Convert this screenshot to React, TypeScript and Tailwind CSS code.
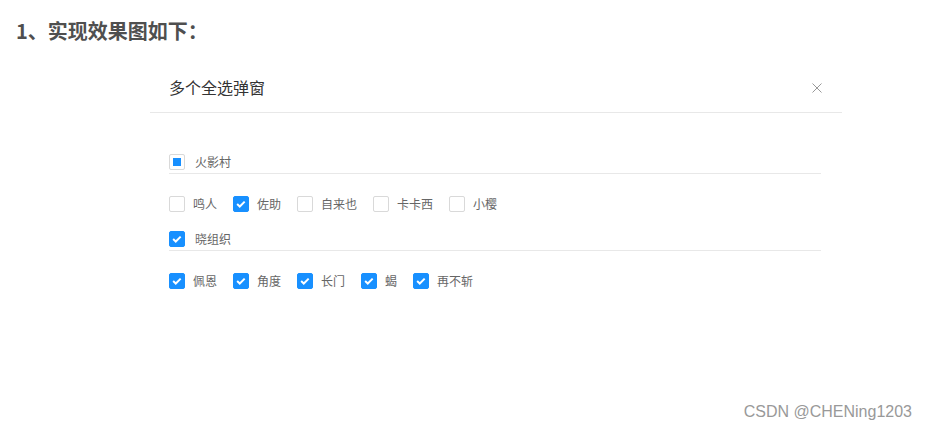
import React, { useState } from 'react';

const cjk = '"Noto Sans CJK SC", "Noto Sans", sans-serif';

interface Group {
  name: string;
  members: string[];
}

const groups: Group[] = [
  { name: '火影村', members: ['鸣人', '佐助', '自来也', '卡卡西', '小樱'] },
  { name: '晓组织', members: ['佩恩', '角度', '长门', '蝎', '再不斩'] },
];

function Box({ state, onClick }: { state: 'off' | 'on' | 'half'; onClick?: () => void }) {
  if (state === 'on') {
    return (
      <span
        onClick={onClick}
        className="w-[16px] h-[16px] rounded-[2px] bg-[#1890ff] border border-[#1890ff] flex items-center justify-center shrink-0 cursor-pointer"
      >
        <svg width="16" height="16" viewBox="0 0 16 16" className="block">
          <path d="M3.6 8 L6.6 10.9 L12.2 5.3" fill="none" stroke="#fff" strokeWidth="2.2" />
        </svg>
      </span>
    );
  }
  return (
    <span
      onClick={onClick}
      className="w-[16px] h-[16px] rounded-[2px] bg-white border border-[#d9d9d9] flex items-center justify-center shrink-0 cursor-pointer"
    >
      {state === 'half' && <span className="w-[8px] h-[8px] bg-[#1890ff]" />}
    </span>
  );
}

export default function App() {
  const [checked, setChecked] = useState<Record<string, boolean>>({
    佐助: true,
    佩恩: true,
    角度: true,
    长门: true,
    蝎: true,
    再不斩: true,
  });

  const toggle = (name: string) => setChecked(prev => ({ ...prev, [name]: !prev[name] }));

  const groupState = (g: Group) => {
    const n = g.members.filter(m => checked[m]).length;
    if (n === 0) return 'off';
    if (n === g.members.length) return 'on';
    return 'half';
  };

  const toggleGroup = (g: Group) => {
    const all = groupState(g) !== 'on';
    setChecked(prev => {
      const next = { ...prev };
      g.members.forEach(m => (next[m] = all));
      return next;
    });
  };

  return (
    <div className="relative w-full h-[432px] bg-white overflow-hidden" style={{ fontFamily: cjk }}>
      {/* Heading */}
      <h3 className="pt-[17px] pl-[16px] text-[20px] leading-[28px] font-bold text-[#4f4f4f]">
        1、实现效果图如下：
      </h3>

      {/* Modal */}
      <div className="ml-[150px] w-[692px] mt-[16px] bg-white">
        <div className="h-[52px] pl-[19px] pr-[20px] flex items-center justify-between border-b border-[#e8e8e8]">
          <span className="text-[16px] leading-[22px] text-[#333]">多个全选弹窗</span>
          <svg width="10" height="10" viewBox="0 0 10 10" className="mt-[2px]">
            <path d="M0.5 0.5 L9.5 9.5 M9.5 0.5 L0.5 9.5" stroke="#999" strokeWidth="1" fill="none" />
          </svg>
        </div>

        <div className="pl-[19px] pr-[21px] pt-[41px]">
          {groups.map((g, gi) => (
            <div key={g.name} className={gi === 0 ? '' : 'mt-[19px]'}>
              <div className="flex items-center pb-[3px] border-b border-[#e8e8e8]">
                <Box state={groupState(g)} onClick={() => toggleGroup(g)} />
                <span className="ml-[10px] text-[12px] leading-[16px] text-[#666]">{g.name}</span>
              </div>
              <div className="flex items-center mt-[22px]">
                {g.members.map(m => (
                  <label key={m} className="flex items-center mr-[16px] cursor-pointer">
                    <Box state={checked[m] ? 'on' : 'off'} onClick={() => toggle(m)} />
                    <span className="ml-[8px] text-[12px] leading-[16px] text-[#666]">{m}</span>
                  </label>
                ))}
              </div>
            </div>
          ))}
        </div>
      </div>

      {/* Watermark */}
      <div
        className="absolute right-[15px] bottom-[10px] text-[16px] leading-[20px] text-[#999]"
        style={{ fontFamily: '"Liberation Sans", Arial, sans-serif' }}
      >
        CSDN @CHENing1203
      </div>
    </div>
  );
}
